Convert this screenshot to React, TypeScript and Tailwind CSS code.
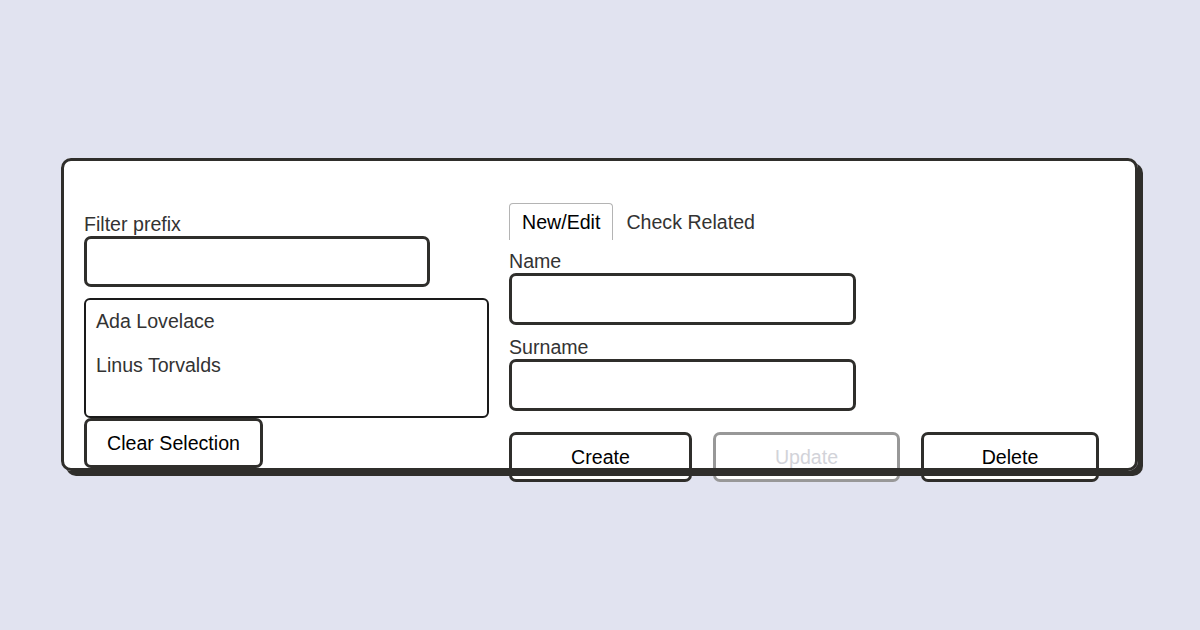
import React from "react";

const font = { fontFamily: '"Liberation Sans", Arial, sans-serif' };

function Field({ label, h }: { label: string; h: string }) {
    return (
        <div className="flex flex-col">
            <label className="text-[19.6px] leading-[22px] text-[#333]">{label}</label>
            <input className={`mt-[1px] w-[347px] ${h} rounded-[7px] border-[3px] border-[#2f2e2b] bg-white outline-none`}/>
        </div>
    );
}

export default function App() {
    return (
        <div className="flex h-[630px] w-[1200px] items-start bg-[#e1e3f0] pl-[61px] pt-[158px]" style={font}>
            <div className="relative h-[313px] w-[1077px] rounded-[10px] bg-white">
                <div className="flex gap-[20px] pl-[23px] pt-[45px]">
                    {/* left column */}
                    <div className="mt-[10px] flex w-[405px] flex-col">
                        <label className="text-[19.6px] leading-[22px] text-[#333]">Filter prefix</label>
                        <input className="mt-[1px] h-[51px] w-[346px] rounded-[7px] border-[3px] border-[#2f2e2b] bg-white outline-none"/>
                        <ul className="mt-[11px] h-[120px] w-[405px] rounded-[6px] border-2 border-[#1a1a1a] text-[19.6px] text-[#333]">
                            <li className="flex h-[44px] items-center pl-[10px]">Ada Lovelace</li>
                            <li className="flex h-[44px] items-center pl-[10px]">Linus Torvalds</li>
                        </ul>
                        <button className="h-[50px] w-[179px] rounded-[7px] border-[3px] border-[#2f2e2b] bg-white pt-[1px] text-[19.6px] text-black">
                            Clear Selection
                        </button>
                    </div>

                    {/* right column */}
                    <div className="flex w-[590px] flex-col">
                        <div className="flex h-[37px] items-stretch text-[19.6px]">
                            <div className="flex items-center rounded-t-[4px] border border-b-0 border-[#b4b4b4] px-[12px] pt-[2px] text-black">New/Edit</div>
                            <div className="flex items-center px-[13px] pt-[2px] text-[#333]">Check Related</div>
                        </div>
                        <div className="mt-[10px]">
                            <Field label="Name" h="h-[52px]"/>
                        </div>
                        <div className="mt-[11px]">
                            <Field label="Surname" h="h-[52px]"/>
                        </div>
                        <div className="mt-[21px] flex justify-between text-[19.6px]">
                            <button className="h-[50px] w-[183px] rounded-[7px] border-[3px] border-[#2f2e2b] bg-white pt-[1px] text-black">Create</button>
                            <button disabled className="h-[50px] w-[187px] rounded-[7px] border-[3px] border-[#989898] bg-white pt-[1px] text-[#d2d3d9]">Update</button>
                            <button className="h-[50px] w-[178px] rounded-[7px] border-[3px] border-[#2f2e2b] bg-white pt-[1px] text-black">Delete</button>
                        </div>
                    </div>
                </div>

                {/* frame drawn over the content */}
                <div className="pointer-events-none absolute inset-0 rounded-[10px] border-[3px] border-[#2f2e2b] shadow-[5px_5px_0_#2f2e2b]"/>
            </div>
        </div>
    );
}
